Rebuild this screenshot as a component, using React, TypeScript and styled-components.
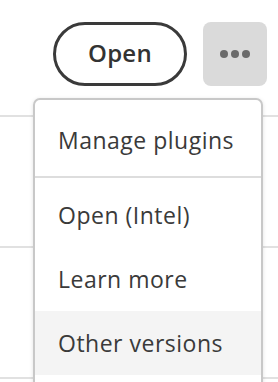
import * as React from "react";
import styled, { createGlobalStyle } from "styled-components";

const GlobalStyle = createGlobalStyle`
  html, body {
    margin: 0;
    padding: 0;
    background: #ffffff;
  }
  body {
    font-family: "Open Sans", "Noto Sans", sans-serif;
    -webkit-font-smoothing: antialiased;
  }
`;

const Page = styled.div`
  position: relative;
  width: 278px;
  height: 382px;
  overflow: hidden;
  background: #ffffff;
`;

const Toolbar = styled.div`
  height: 117px;
  box-sizing: border-box;
  border-bottom: 2px solid #e1e1e1;
  display: flex;
  flex-direction: row;
  align-items: flex-start;
  justify-content: flex-end;
  gap: 16px;
  padding: 22px 11px 0 0;
`;

const OpenButton = styled.button`
  width: 134px;
  height: 64px;
  box-sizing: border-box;
  border: 3px solid #3a3a3a;
  border-radius: 32px;
  background: #ffffff;
  color: #333333;
  font-family: "Open Sans", sans-serif;
  font-weight: 600;
  font-size: 24px;
  letter-spacing: 0.3px;
  padding: 0 0 3px;
  cursor: pointer;
`;

const MoreButton = styled.button`
  width: 64px;
  height: 64px;
  border: none;
  border-radius: 8px;
  background: #dadada;
  display: flex;
  align-items: center;
  justify-content: center;
  gap: 3px;
  padding: 0;
`;

const Dot = styled.span`
  width: 8px;
  height: 8px;
  border-radius: 50%;
  background: #6b6b6b;
`;

const ListRow = styled.div`
  height: 131px;
  box-sizing: border-box;
  border-bottom: 2px solid #e1e1e1;
`;

const Menu = styled.div`
  position: absolute;
  top: 98px;
  left: 33px;
  width: 230px;
  box-sizing: border-box;
  border: 2px solid #c8c8c8;
  border-radius: 7px;
  background: #ffffff;
  box-shadow: 0 1px 4px rgba(0, 0, 0, 0.12);
  padding: 8px 0 40px;
`;

const MenuItem = styled.div<{ $active?: boolean }>`
  height: 64px;
  display: flex;
  align-items: center;
  padding: 0 0 0 23px;
  box-sizing: border-box;
  font-size: 23px;
  letter-spacing: 0.5px;
  color: #3a3a3a;
  background: ${(p) => (p.$active ? "#f4f4f4" : "transparent")};
`;

const Divider = styled.div`
  height: 2px;
  background: #dddddd;
  margin: 4px 0 5px;
`;

const App = () => {
  return (
    <>
      <GlobalStyle />
      <Page>
        <Toolbar>
          <OpenButton>Open</OpenButton>
          <MoreButton aria-label="More">
            <Dot />
            <Dot />
            <Dot />
          </MoreButton>
        </Toolbar>
        <ListRow />
        <ListRow />
        <Menu>
          <MenuItem>Manage plugins</MenuItem>
          <Divider />
          <MenuItem>Open (Intel)</MenuItem>
          <MenuItem>Learn more</MenuItem>
          <MenuItem $active>Other versions</MenuItem>
        </Menu>
      </Page>
    </>
  );
};

export default App;
